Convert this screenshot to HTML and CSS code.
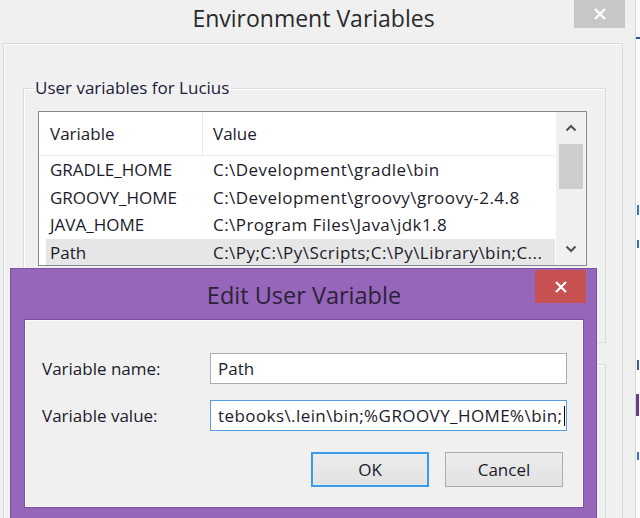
FILE: index.html
```html
<!DOCTYPE html>
<html lang="en">
	<head>
		<meta charset="UTF-8" />
		<meta name="viewport" content="width=device-width, initial-scale=1.0" />
		<title>Environment Variables</title>

		<link rel="stylesheet" href="styles.css">
	</head>
	<body>
		<div id="desk">
			<!-- main window -->
			<div class="env-window">
				<div class="titlebar">
					<span class="title">Environment Variables</span>
					<span class="close close-gray">
						<svg width="14" height="14" viewBox="0 0 14 14"><path d="M2 2 L12 12 M12 2 L2 12" stroke="#fff" stroke-width="2.2" /></svg>
					</span>
				</div>

				<div class="panel">
					<fieldset class="group user-group">
						<legend>User variables for Lucius</legend>
						<div class="listview">
							<div class="list-main">
								<div class="list-head">
									<span class="col-var">Variable</span>
									<span class="col-val">Value</span>
								</div>
								<div class="row"><span class="col-var">GRADLE_HOME</span><span class="col-val">C:\Development\gradle\bin</span></div>
								<div class="row"><span class="col-var">GROOVY_HOME</span><span class="col-val">C:\Development\groovy\groovy-2.4.8</span></div>
								<div class="row"><span class="col-var">JAVA_HOME</span><span class="col-val">C:\Program Files\Java\jdk1.8</span></div>
								<div class="row selected"><span class="col-var">Path</span><span class="col-val">C:\Py;C:\Py\Scripts;C:\Py\Library\bin;C...</span></div>
							</div>
							<div class="scrollbar">
								<span class="arrow">
									<svg width="12" height="8" viewBox="0 0 12 8"><polyline points="1.5,6.5 6,2 10.5,6.5" fill="none" stroke="#505050" stroke-width="2" /></svg>
								</span>
								<span class="track"><span class="thumb"></span></span>
								<span class="arrow">
									<svg width="12" height="8" viewBox="0 0 12 8"><polyline points="1.5,1.5 6,6 10.5,1.5" fill="none" stroke="#505050" stroke-width="2" /></svg>
								</span>
							</div>
						</div>
					</fieldset>

					<!-- system variables box, mostly under the dialog -->
					<div class="group system-group"></div>
				</div>
			</div>

			<!-- edge of the window behind -->
			<div class="back-window">
				<span class="bit b0"></span>
				<span class="bit b1"></span>
				<span class="bit b2"></span>
				<span class="bit b3"></span>
				<span class="bit b4"></span>
				<span class="bit b5"></span>
			</div>

			<!-- edit dialog -->
			<div class="dialog">
				<div class="dialog-titlebar">
					<span class="title">Edit User Variable</span>
					<span class="close close-red">
						<svg width="14" height="14" viewBox="0 0 14 14"><path d="M2 2 L12 12 M12 2 L2 12" stroke="#fff" stroke-width="2.2" /></svg>
					</span>
				</div>
				<div class="dialog-client">
					<div class="form">
						<label for="varname">Variable name:</label>
						<input class="field" type="text" id="varname" value="Path" />
						<label for="varvalue">Variable value:</label>
						<div class="field focused path-text" id="varvalue">tebooks\.lein\bin;%GROOVY_HOME%\bin;<span class="caret"></span></div>
					</div>
					<div class="buttons">
						<button class="btn default">OK</button>
						<button class="btn">Cancel</button>
					</div>
				</div>
			</div>
		</div>
	</body>
</html>
```

FILE: styles.css
```css
body {
	margin: 0;
	background-color: #f0f0f0;
	font-family: "Open Sans", "Noto Sans", sans-serif;
	font-size: 17px;
	color: #1b1b2b;
}

#desk {
	position: relative;
	width: 640px;
	height: 518px;
	overflow: hidden;
}

/* main window */

.env-window {
	width: 635px;
	border-right: 1px solid #d6d6d6;
	display: flex;
	flex-direction: column;
}

.titlebar {
	flex: none;
	height: 43px;
	position: relative;
	display: flex;
	justify-content: center;
	align-items: center;
}

.title {
	font-size: 23px;
	color: #2a2a2a;
	margin-left: -8px;
	margin-top: -7px;
}

.close {
	position: absolute;
	top: 0;
	width: 51px;
	height: 28px;
	display: flex;
	align-items: center;
	justify-content: center;
}

.close-gray {
	right: 10px;
	background-color: #c7c7c7;
}

.panel {
	margin-left: 3px;
	width: 620px;
	border: 1px solid #d9d9d9;
	border-bottom: none;
	box-shadow: inset 1px 1px 0 #fafafa;
	padding: 31px 16px 0 19px;
	box-sizing: border-box;
}

.group {
	margin: 0;
	border: 1px solid #dcdcdc;
	box-shadow: inset 1px 1px 0 #fff;
	padding: 10px 18px 0 14px;
}

.group legend {
	padding: 0 2px;
	margin-left: -5px;
	line-height: 26px;
	color: #1b1b3b;
}

.user-group {
	height: 268px;
	box-sizing: border-box;
}

.system-group {
	margin-top: 21px;
	height: 200px;
}

/* list view */

.listview {
	display: flex;
	height: 153px;
	border: 1px solid #828790;
	background-color: #fff;
	overflow: hidden;
}

.list-main {
	flex: 1;
}

.list-head {
	display: flex;
	height: 43px;
	align-items: center;
	border-bottom: 1px solid #e5ecf3;
}

.list-head .col-var {
	width: 164px;
	border-right: 1px solid #e5ecf3;
	height: 43px;
	line-height: 44px;
}

.list-head .col-val {
	line-height: 44px;
}

.col-var {
	padding-left: 11px;
	box-sizing: border-box;
}

.col-val {
	padding-left: 10px;
	white-space: nowrap;
}

.row .col-val {
	letter-spacing: 0.45px;
}

.path-text {
	letter-spacing: 0.42px;
	padding-right: 1px;
}

.row {
	display: flex;
	height: 27.6px;
	align-items: center;
	margin-left: 7px;
}

.row .col-var {
	width: 157px;
	padding-left: 4px;
}

.selected {
	background-color: #e6e6e6;
}

.scrollbar {
	width: 30px;
	display: flex;
	flex-direction: column;
	background-color: #f0f0f0;
	border-left: 1px solid #fff;
}

.arrow {
	height: 32px;
	display: flex;
	align-items: center;
	justify-content: center;
}

.track {
	flex: 1;
	padding: 0 3px;
}

.thumb {
	display: block;
	height: 45px;
	background-color: #cdcdcd;
}

/* window behind, only its edge shows */

.back-window {
	position: absolute;
	left: 636px;
	top: 0;
	width: 4px;
	height: 518px;
	overflow: hidden;
	background-color: #fbfbfb;
}

.bit {
	position: absolute;
	left: 1px;
	width: 2px;
	background-color: #3a6fd0;
}

.b0 { top: 37px; left: 0; width: 4px; height: 2px; background-color: #2f4fa0; }
.b1 { top: 205px; height: 10px; }
.b2 { top: 240px; height: 8px; }
.b3 { top: 360px; height: 10px; background-color: #3a5a9a; }
.b4 { top: 394px; left: 0; width: 3px; height: 22px; background-color: #6a3b8a; }
.b5 { top: 452px; height: 8px; }

/* edit dialog */

.dialog {
	position: absolute;
	left: 10px;
	top: 268px;
	width: 587px;
	height: 254px;
	box-sizing: border-box;
	background-color: #9666bb;
	border: 1px solid #7d519e;
	padding: 0 12px 0 13px;
}

.dialog-titlebar {
	height: 50px;
	position: relative;
	display: flex;
	justify-content: center;
	align-items: center;
}

.dialog-titlebar .title {
	font-size: 23.5px;
	color: #2c2238;
	margin-left: 0;
	margin-top: 2px;
}

.close-red {
	right: -2px;
	top: 1px;
	height: 33px;
	background-color: #c75050;
}

.dialog-client {
	height: 189px;
	box-sizing: border-box;
	background-color: #f0f0f0;
	border: 1px solid #7d519e;
	box-shadow: inset 0 0 0 1px #fbfbfb;
	padding: 33px 16px 0 17px;
}

.form {
	display: grid;
	grid-template-columns: 168px 1fr;
	row-gap: 16px;
	align-items: center;
}

.form label {
	color: #1b1b2b;
}

.field {
	height: 31px;
	box-sizing: border-box;
	border: 1px solid #abadb3;
	background-color: #fff;
	font: inherit;
	color: #1b1b2b;
	padding: 0 7px;
	margin: 0;
	outline: none;
	display: flex;
	align-items: center;
	white-space: nowrap;
	overflow: hidden;
}

.focused {
	border-color: #569de5;
}

.caret {
	display: inline-block;
	flex: none;
	width: 1px;
	height: 20px;
	background-color: #000;
	margin-left: 1px;
}

.buttons {
	display: flex;
	justify-content: flex-end;
	gap: 16px;
	margin-top: 21px;
	padding-right: 4px;
}

.btn {
	width: 118px;
	height: 35px;
	font: inherit;
	color: #1b1b2b;
	background: linear-gradient(#ececec, #e2e2e2);
	border: 1px solid #acacac;
	padding: 0;
}

.default {
	border: 2px solid #3c9ae6;
	box-shadow: inset 0 0 0 1px #dfeefa;
}
```
